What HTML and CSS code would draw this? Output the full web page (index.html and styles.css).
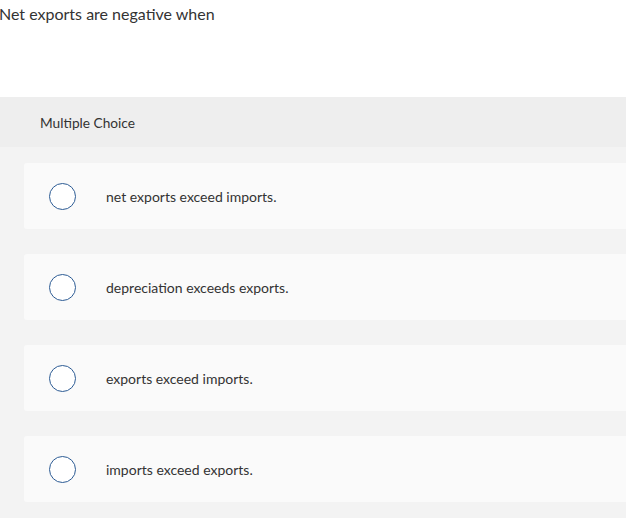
FILE: index.html
```html
<!DOCTYPE html>
<html>
<head>
<meta charset="utf-8">
<link rel="stylesheet" href="styles.css">
</head>
<body>
<div class="question">Net exports are negative when</div>
<div class="mc">
  <div class="mc-header">Multiple Choice</div>
  <div class="options">
    <div class="option"><span class="radio"></span><span class="label">net exports exceed imports.</span></div>
    <div class="option"><span class="radio"></span><span class="label">depreciation exceeds exports.</span></div>
    <div class="option"><span class="radio"></span><span class="label">exports exceed imports.</span></div>
    <div class="option"><span class="radio"></span><span class="label">imports exceed exports.</span></div>
  </div>
</div>
</body>
</html>
```
FILE: styles.css
```css
html, body {
  margin: 0;
  padding: 0;
  background: #ffffff;
  font-family: Lato, "Open Sans", sans-serif;
  color: #333333;
}
.question {
  font-size: 16px;
  line-height: 18px;
  padding: 5px 0 0 0;
  margin-left: -1px;
  height: 97px;
  box-sizing: border-box;
  color: #333;
}
.mc {
  background: #f3f3f3;
  min-height: 421px;
}
.mc-header {
  background: #eeeeee;
  height: 50px;
  display: flex;
  align-items: center;
  padding-left: 40px;
  font-size: 13.7px;
  color: #333;
}
.options {
  display: flex;
  flex-direction: column;
  gap: 25px;
  padding: 16px 0 17px 24px;
}
.option {
  background: #fafafa;
  height: 66px;
  border-radius: 3px 0 0 3px;
  display: flex;
  align-items: center;
  padding-left: 25px;
}
.radio {
  width: 25px;
  height: 25px;
  border: 1.5px solid #2c5b94;
  border-radius: 50%;
  background: #fff;
  flex: none;
}
.label {
  margin-left: 30px;
  font-size: 14px;
  color: #333;
}
```
